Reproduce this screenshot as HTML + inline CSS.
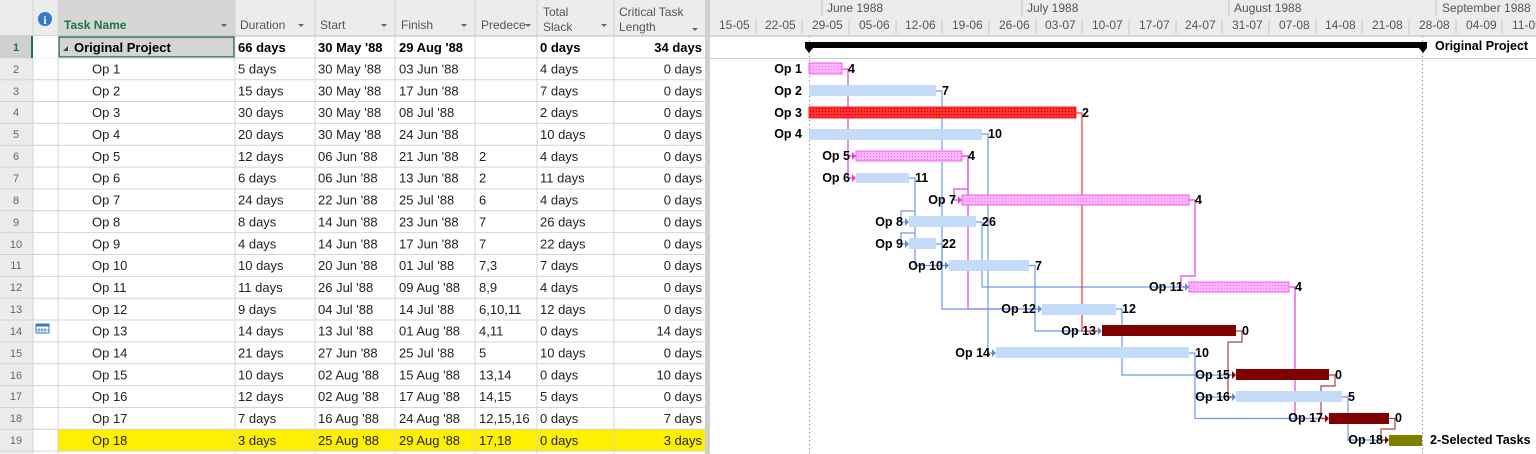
<!DOCTYPE html>
<html><head><meta charset="utf-8"><style>
html,body{margin:0;padding:0;background:#fff;width:1536px;height:454px;overflow:hidden}
svg{display:block}
.g{font-family:"Liberation Sans Narrow","Liberation Sans",sans-serif;font-size:13px;fill:#222}
.h{font-family:"Liberation Sans Narrow","Liberation Sans",sans-serif;font-size:12px;fill:#555}
.b{font-weight:bold;fill:#000}
.rn{font-family:"Liberation Sans Narrow","Liberation Sans",sans-serif;font-size:11px;fill:#666}
.gl{font-family:"Liberation Sans Narrow","Liberation Sans",sans-serif;font-size:12.5px;font-weight:bold;fill:#000}
</style></head><body>
<svg width="1536" height="454" xmlns="http://www.w3.org/2000/svg">
<defs>
<pattern id="pk" width="3" height="3" patternUnits="userSpaceOnUse"><rect width="3" height="3" fill="#ffb4ff"/><rect width="1" height="1" fill="#f070f0"/></pattern>
<pattern id="rd" width="3" height="3" patternUnits="userSpaceOnUse"><rect width="3" height="3" fill="#ff3030"/><rect width="1" height="1" fill="#c00000"/></pattern>
</defs>
<!-- grid header -->
<rect x="0" y="0" width="705" height="36" fill="#ececec"/>
<rect x="58" y="0" width="177" height="36" fill="#d6d6d6"/>
<rect x="0" y="36" width="33" height="418" fill="#ececec"/>
<rect x="58" y="36" width="177" height="22" fill="#d4d4d4"/>
<rect x="59" y="37" width="175" height="20" fill="none" stroke="#217346" stroke-width="1.5"/>
<rect x="58" y="429.3" width="647" height="21.85" fill="#ffef00"/>
<g stroke="#d4d4d4" stroke-width="1">
<line x1="33" y1="0" x2="33" y2="454"/><line x1="58" y1="0" x2="58" y2="454"/><line x1="235" y1="0" x2="235" y2="454"/><line x1="315" y1="0" x2="315" y2="454"/><line x1="395" y1="0" x2="395" y2="454"/><line x1="475" y1="0" x2="475" y2="454"/><line x1="537" y1="0" x2="537" y2="454"/><line x1="614" y1="0" x2="614" y2="454"/>
<line x1="0" y1="57.85" x2="705" y2="57.85"/><line x1="0" y1="79.7" x2="705" y2="79.7"/><line x1="0" y1="101.55" x2="705" y2="101.55"/><line x1="0" y1="123.4" x2="705" y2="123.4"/><line x1="0" y1="145.25" x2="705" y2="145.25"/><line x1="0" y1="167.1" x2="705" y2="167.1"/><line x1="0" y1="188.95" x2="705" y2="188.95"/><line x1="0" y1="210.8" x2="705" y2="210.8"/><line x1="0" y1="232.65" x2="705" y2="232.65"/><line x1="0" y1="254.5" x2="705" y2="254.5"/><line x1="0" y1="276.35" x2="705" y2="276.35"/><line x1="0" y1="298.2" x2="705" y2="298.2"/><line x1="0" y1="320.05" x2="705" y2="320.05"/><line x1="0" y1="341.9" x2="705" y2="341.9"/><line x1="0" y1="363.75" x2="705" y2="363.75"/><line x1="0" y1="385.6" x2="705" y2="385.6"/><line x1="0" y1="407.45" x2="705" y2="407.45"/><line x1="0" y1="429.3" x2="705" y2="429.3"/><line x1="0" y1="451.15" x2="705" y2="451.15"/>
</g>
<line x1="0" y1="36" x2="705" y2="36" stroke="#bbb"/>
<rect x="33" y="36" width="25" height="22" fill="#fff"/>
<rect x="0" y="36" width="33" height="22" fill="#d0d0d0"/>
<line x1="32" y1="36" x2="32" y2="58" stroke="#217346" stroke-width="2"/>
<!-- header text -->
<circle cx="45" cy="19" r="7" fill="#2f7bd0"/><text x="45" y="24" font-family="Liberation Serif" font-size="12" font-weight="bold" fill="#fff" text-anchor="middle">i</text>
<text x="64" y="29" class="h" style="fill:#217346;font-weight:bold">Task Name</text>
<text x="240" y="29" class="h">Duration</text><text x="320" y="29" class="h">Start</text><text x="401" y="29" class="h">Finish</text><text x="481" y="29" class="h">Predece</text><text x="543" y="16" class="h">Total</text><text x="543" y="31" class="h">Slack</text><text x="619" y="16" class="h">Critical Task</text><text x="619" y="31" class="h">Length</text>
<g fill="#666"><path d="M221 24h6l-3 3z"/><path d="M298 24h6l-3 3z"/><path d="M381 24h6l-3 3z"/><path d="M461 24h6l-3 3z"/><path d="M525 24h6l-3 3z"/><path d="M601 24h6l-3 3z"/><path d="M692 28h6l-3 3z"/></g>
<!-- row numbers -->
<g class="rn" text-anchor="middle">
<text x="16" y="51" style="fill:#217346;font-weight:bold">1</text><text x="16" y="73">2</text><text x="16" y="95">3</text><text x="16" y="116">4</text><text x="16" y="138">5</text><text x="16" y="160">6</text><text x="16" y="182">7</text><text x="16" y="204">8</text><text x="16" y="226">9</text><text x="16" y="248">10</text><text x="16" y="269">11</text><text x="16" y="291">12</text><text x="16" y="313">13</text><text x="16" y="335">14</text><text x="16" y="357">15</text><text x="16" y="379">16</text><text x="16" y="400">17</text><text x="16" y="422">18</text><text x="16" y="444">19</text>
</g>
<g><rect x="36" y="324" width="13" height="9" fill="#fff" stroke="#3a78c3"/><rect x="36" y="324" width="13" height="2.5" fill="#3a78c3"/><path d="M39 328v5M42 328v5M45 328v5M36 330h13" stroke="#3a78c3" stroke-width="0.8"/></g>
<!-- grid rows -->
<g class="g">
<g class="b"><path d="M63 51l5-5v5z" fill="#444"/><text x="74" y="52">Original Project</text><text x="238" y="52">66 days</text><text x="318" y="52">30 May '88</text><text x="399" y="52">29 Aug '88</text><text x="540" y="52">0 days</text><text x="702" y="52" text-anchor="end">34 days</text></g>
<text x="92" y="73.5">Op 1</text><text x="238" y="73.5">5 days</text><text x="318" y="73.5">30 May '88</text><text x="399" y="73.5">03 Jun '88</text><text x="540" y="73.5">4 days</text><text x="702" y="73.5" text-anchor="end">0 days</text>
<text x="92" y="95.3">Op 2</text><text x="238" y="95.3">15 days</text><text x="318" y="95.3">30 May '88</text><text x="399" y="95.3">17 Jun '88</text><text x="540" y="95.3">7 days</text><text x="702" y="95.3" text-anchor="end">0 days</text>
<text x="92" y="117.2">Op 3</text><text x="238" y="117.2">30 days</text><text x="318" y="117.2">30 May '88</text><text x="399" y="117.2">08 Jul '88</text><text x="540" y="117.2">2 days</text><text x="702" y="117.2" text-anchor="end">0 days</text>
<text x="92" y="139">Op 4</text><text x="238" y="139">20 days</text><text x="318" y="139">30 May '88</text><text x="399" y="139">24 Jun '88</text><text x="540" y="139">10 days</text><text x="702" y="139" text-anchor="end">0 days</text>
<text x="92" y="160.9">Op 5</text><text x="238" y="160.9">12 days</text><text x="318" y="160.9">06 Jun '88</text><text x="399" y="160.9">21 Jun '88</text><text x="479" y="160.9">2</text><text x="540" y="160.9">4 days</text><text x="702" y="160.9" text-anchor="end">0 days</text>
<text x="92" y="182.7">Op 6</text><text x="238" y="182.7">6 days</text><text x="318" y="182.7">06 Jun '88</text><text x="399" y="182.7">13 Jun '88</text><text x="479" y="182.7">2</text><text x="540" y="182.7">11 days</text><text x="702" y="182.7" text-anchor="end">0 days</text>
<text x="92" y="204.6">Op 7</text><text x="238" y="204.6">24 days</text><text x="318" y="204.6">22 Jun '88</text><text x="399" y="204.6">25 Jul '88</text><text x="479" y="204.6">6</text><text x="540" y="204.6">4 days</text><text x="702" y="204.6" text-anchor="end">0 days</text>
<text x="92" y="226.4">Op 8</text><text x="238" y="226.4">8 days</text><text x="318" y="226.4">14 Jun '88</text><text x="399" y="226.4">23 Jun '88</text><text x="479" y="226.4">7</text><text x="540" y="226.4">26 days</text><text x="702" y="226.4" text-anchor="end">0 days</text>
<text x="92" y="248.3">Op 9</text><text x="238" y="248.3">4 days</text><text x="318" y="248.3">14 Jun '88</text><text x="399" y="248.3">17 Jun '88</text><text x="479" y="248.3">7</text><text x="540" y="248.3">22 days</text><text x="702" y="248.3" text-anchor="end">0 days</text>
<text x="92" y="270.1">Op 10</text><text x="238" y="270.1">10 days</text><text x="318" y="270.1">20 Jun '88</text><text x="399" y="270.1">01 Jul '88</text><text x="479" y="270.1">7,3</text><text x="540" y="270.1">7 days</text><text x="702" y="270.1" text-anchor="end">0 days</text>
<text x="92" y="292">Op 11</text><text x="238" y="292">11 days</text><text x="318" y="292">26 Jul '88</text><text x="399" y="292">09 Aug '88</text><text x="479" y="292">8,9</text><text x="540" y="292">4 days</text><text x="702" y="292" text-anchor="end">0 days</text>
<text x="92" y="313.8">Op 12</text><text x="238" y="313.8">9 days</text><text x="318" y="313.8">04 Jul '88</text><text x="399" y="313.8">14 Jul '88</text><text x="479" y="313.8">6,10,11</text><text x="540" y="313.8">12 days</text><text x="702" y="313.8" text-anchor="end">0 days</text>
<text x="92" y="335.6">Op 13</text><text x="238" y="335.6">14 days</text><text x="318" y="335.6">13 Jul '88</text><text x="399" y="335.6">01 Aug '88</text><text x="479" y="335.6">4,11</text><text x="540" y="335.6">0 days</text><text x="702" y="335.6" text-anchor="end">14 days</text>
<text x="92" y="357.5">Op 14</text><text x="238" y="357.5">21 days</text><text x="318" y="357.5">27 Jun '88</text><text x="399" y="357.5">25 Jul '88</text><text x="479" y="357.5">5</text><text x="540" y="357.5">10 days</text><text x="702" y="357.5" text-anchor="end">0 days</text>
<text x="92" y="379.4">Op 15</text><text x="238" y="379.4">10 days</text><text x="318" y="379.4">02 Aug '88</text><text x="399" y="379.4">15 Aug '88</text><text x="479" y="379.4">13,14</text><text x="540" y="379.4">0 days</text><text x="702" y="379.4" text-anchor="end">10 days</text>
<text x="92" y="401.2">Op 16</text><text x="238" y="401.2">12 days</text><text x="318" y="401.2">02 Aug '88</text><text x="399" y="401.2">17 Aug '88</text><text x="479" y="401.2">14,15</text><text x="540" y="401.2">5 days</text><text x="702" y="401.2" text-anchor="end">0 days</text>
<text x="92" y="423.1">Op 17</text><text x="238" y="423.1">7 days</text><text x="318" y="423.1">16 Aug '88</text><text x="399" y="423.1">24 Aug '88</text><text x="479" y="423.1">12,15,16</text><text x="540" y="423.1">0 days</text><text x="702" y="423.1" text-anchor="end">7 days</text>
<text x="92" y="444.9">Op 18</text><text x="238" y="444.9">3 days</text><text x="318" y="444.9">25 Aug '88</text><text x="399" y="444.9">29 Aug '88</text><text x="479" y="444.9">17,18</text><text x="540" y="444.9">0 days</text><text x="702" y="444.9" text-anchor="end">3 days</text>
</g>
<!-- splitter -->
<rect x="705" y="0" width="5" height="454" fill="#d0d0d0"/>
<!-- gantt header -->
<rect x="710" y="0" width="826" height="36" fill="#ececec"/>
<line x1="710" y1="36" x2="1536" y2="36" stroke="#bbb"/>
<g stroke="#c8c8c8"><line x1="822" y1="0" x2="822" y2="16"/><line x1="1022" y1="0" x2="1022" y2="16"/><line x1="1229" y1="0" x2="1229" y2="16"/><line x1="1436" y1="0" x2="1436" y2="16"/>
<line x1="756" y1="20" x2="756" y2="34"/><line x1="802" y1="20" x2="802" y2="34"/><line x1="849" y1="20" x2="849" y2="34"/><line x1="896" y1="20" x2="896" y2="34"/><line x1="942" y1="20" x2="942" y2="34"/><line x1="989" y1="20" x2="989" y2="34"/><line x1="1036" y1="20" x2="1036" y2="34"/><line x1="1082" y1="20" x2="1082" y2="34"/><line x1="1129" y1="20" x2="1129" y2="34"/><line x1="1176" y1="20" x2="1176" y2="34"/><line x1="1222" y1="20" x2="1222" y2="34"/><line x1="1269" y1="20" x2="1269" y2="34"/><line x1="1316" y1="20" x2="1316" y2="34"/><line x1="1362" y1="20" x2="1362" y2="34"/><line x1="1409" y1="20" x2="1409" y2="34"/><line x1="1456" y1="20" x2="1456" y2="34"/><line x1="1502" y1="20" x2="1502" y2="34"/></g>
<g class="h" font-size="11"><text x="827" y="12">June 1988</text><text x="1027" y="12">July 1988</text><text x="1234" y="12">August 1988</text><text x="1442" y="12">September 1988</text>
<text x="719" y="29">15-05</text><text x="765" y="29">22-05</text><text x="812" y="29">29-05</text><text x="859" y="29">05-06</text><text x="905" y="29">12-06</text><text x="952" y="29">19-06</text><text x="999" y="29">26-06</text><text x="1045" y="29">03-07</text><text x="1092" y="29">10-07</text><text x="1139" y="29">17-07</text><text x="1185" y="29">24-07</text><text x="1232" y="29">31-07</text><text x="1279" y="29">07-08</text><text x="1325" y="29">14-08</text><text x="1372" y="29">21-08</text><text x="1419" y="29">28-08</text><text x="1466" y="29">04-09</text><text x="1512" y="29">11-09</text></g>
<line x1="710" y1="58.5" x2="1536" y2="58.5" stroke="#ccc"/>
<line x1="809.5" y1="36" x2="809.5" y2="454" stroke="#999" stroke-dasharray="1.5,2.5"/>
<line x1="1422.5" y1="36" x2="1422.5" y2="454" stroke="#999" stroke-dasharray="1.5,2.5"/>
<!-- summary -->
<rect x="806" y="42" width="619" height="6" fill="#000"/><path d="M805 42h8v6l-4 5-4-5z M1419 42h8v6l-4 5-4-5z" fill="#000"/>
<text x="1435" y="50" class="gl">Original Project</text>
<!-- links -->
<g fill="none" stroke-width="1.2">
<g stroke="#e040e0"><path d="M842 69H848V156H852M848 156V178H852"/><path d="M962 156H968V189H954V200H958"/><path d="M1189 200H1195V276H1181V287H1185"/><path d="M962 156H968V309H1038"/><path d="M1289 287H1295V418.5H1325"/></g>
<g stroke="#6a9be8"><path d="M909 178H915V211H901V222H905M915 211V233H901V244H905M915 233V265.5H945"/><path d="M936 91H942V265.5H945"/><path d="M976 222H982V287H1185"/><path d="M936 244H942V309H1038"/><path d="M1029 265.5H1035V331H1098"/><path d="M982 134H988V353H992"/><path d="M1116 309H1122V375H1232"/><path d="M1189 353H1195V418.5H1325M1195 397H1232"/><path d="M1342 397H1348V440H1385"/></g>
<g stroke="#ff3030"><path d="M1076 113H1082V331H1098"/></g>
<g stroke="#a04848"><path d="M1236 331H1242V342H1228V397H1232"/><path d="M1329 375H1335V386H1321V418.5H1325"/><path d="M1389 418.5H1395V429H1381V440H1385"/></g>
</g>
<g fill="#e040e0"><path d="M852 152l4 4-4 4zM852 174l4 4-4 4zM958 196l4 4-4 4z"/></g>
<g fill="#5a8de0"><path d="M905 218l4 4-4 4zM905 240l4 4-4 4zM945 261.5l4 4-4 4zM1185 283l4 4-4 4zM1038 305l4 4-4 4zM1098 327l4 4-4 4zM992 349l4 4-4 4zM1232 393l4 4-4 4z"/></g>
<g fill="#800000"><path d="M1232 371l4 4-4 4zM1325 414.5l4 4-4 4zM1385 436l4 4-4 4z"/></g>
<!-- bars -->
<rect x="809" y="63" width="33" height="11" fill="url(#pk)" stroke="#f060f0"/>
<rect x="809" y="85" width="127" height="11" fill="#c4dcfa"/>
<rect x="809" y="107" width="267" height="11" fill="url(#rd)" stroke="#ff2020"/>
<rect x="809" y="129" width="173" height="11" fill="#c4dcfa"/>
<rect x="856" y="151" width="106" height="10" fill="url(#pk)" stroke="#f060f0"/>
<rect x="856" y="173" width="53" height="10" fill="#c4dcfa"/>
<rect x="962" y="195" width="227" height="10" fill="url(#pk)" stroke="#f060f0"/>
<rect x="909" y="216" width="67" height="11" fill="#c4dcfa"/>
<rect x="909" y="238" width="27" height="11" fill="#c4dcfa"/>
<rect x="949" y="260" width="80" height="11" fill="#c4dcfa"/>
<rect x="1189" y="282" width="100" height="10" fill="url(#pk)" stroke="#f060f0"/>
<rect x="1042" y="304" width="74" height="11" fill="#c4dcfa"/>
<rect x="1102" y="325" width="134" height="11" fill="#800000"/>
<rect x="996" y="347" width="193" height="11" fill="#c4dcfa"/>
<rect x="1236" y="369" width="93" height="11" fill="#800000"/>
<rect x="1236" y="391" width="106" height="11" fill="#c4dcfa"/>
<rect x="1329" y="413" width="60" height="11" fill="#800000"/>
<rect x="1389" y="435" width="33" height="11" fill="#808000"/>
<!-- bar labels -->
<g class="gl" text-anchor="end">
<text x="802" y="73">Op 1</text><text x="802" y="95">Op 2</text><text x="802" y="117">Op 3</text><text x="802" y="138">Op 4</text><text x="850" y="160">Op 5</text><text x="850" y="182">Op 6</text><text x="956" y="204">Op 7</text><text x="903" y="226">Op 8</text><text x="903" y="248">Op 9</text><text x="943" y="270">Op 10</text><text x="1183" y="291">Op 11</text><text x="1036" y="313">Op 12</text><text x="1096" y="335">Op 13</text><text x="990" y="357">Op 14</text><text x="1230" y="379">Op 15</text><text x="1230" y="401">Op 16</text><text x="1323" y="422">Op 17</text><text x="1383" y="444">Op 18</text>
</g>
<g class="gl">
<text x="848" y="73">4</text><text x="942" y="95">7</text><text x="1082" y="117">2</text><text x="988" y="138">10</text><text x="968" y="160">4</text><text x="915" y="182">11</text><text x="1195" y="204">4</text><text x="982" y="226">26</text><text x="942" y="248">22</text><text x="1035" y="270">7</text><text x="1295" y="291">4</text><text x="1122" y="313">12</text><text x="1242" y="335">0</text><text x="1195" y="357">10</text><text x="1335" y="379">0</text><text x="1348" y="401">5</text><text x="1395" y="422">0</text><text x="1430" y="444">2-Selected Tasks</text>
</g>
</svg>
</body></html>
